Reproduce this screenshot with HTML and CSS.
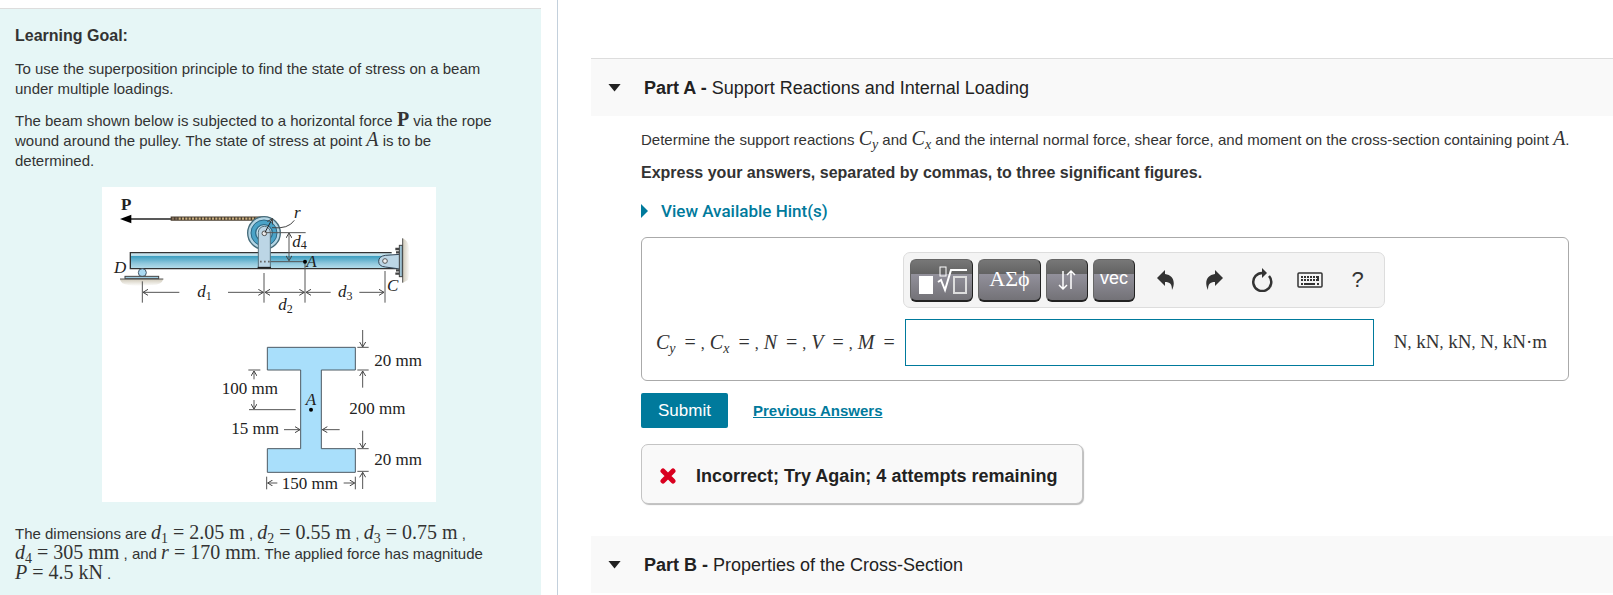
FILE: index.html
```html
<!DOCTYPE html>
<html lang="en">
<head>
  <meta charset="UTF-8">
  <meta name="viewport" content="width=device-width, initial-scale=1.0">
  <title>Superposition - Beam and Pulley</title>
  <link rel="stylesheet" href="styles.css">
</head>
<body>
  <div class="page">
    <!-- Problem statement -->
    <aside class="intro-pane">
      <div class="intro">
        <p class="goal"><b>Learning Goal:</b></p>
        <p>To use the superposition principle to find the state of stress on a beam under multiple loadings.</p>
        <p>The beam shown below is subjected to a horizontal force <b class="math">P</b> via the rope wound around the pulley. The state of stress at point <i class="math">A</i> is to be determined.</p>

        <svg class="figure" viewBox="0 0 1002 945" role="img" aria-label="Beam with pulley and its cross-section">
          <defs>
            <linearGradient id="beam" x1="0" y1="0" x2="0" y2="1">
              <stop offset="0" stop-color="#d5edf5"/>
              <stop offset="0.2" stop-color="#b5dbe8"/>
              <stop offset="0.24" stop-color="#3f9fc0"/>
              <stop offset="0.65" stop-color="#8cc6dc"/>
              <stop offset="1" stop-color="#b9dfec"/>
            </linearGradient>
            <linearGradient id="ground" x1="0" y1="0" x2="0" y2="1">
              <stop offset="0" stop-color="#cfc9b8"/>
              <stop offset="1" stop-color="#fff"/>
            </linearGradient>
            <linearGradient id="wall" x1="0" y1="0" x2="1" y2="0">
              <stop offset="0" stop-color="#cfc9b8"/>
              <stop offset="1" stop-color="#fff"/>
            </linearGradient>
            <marker id="tip" viewBox="0 0 18 20" refX="16" refY="10" markerWidth="18" markerHeight="20" markerUnits="userSpaceOnUse" orient="auto-start-reverse">
              <path d="M1 1 L16 10 L1 19" fill="none" stroke="#444" stroke-width="3"/>
            </marker>
          </defs>

          <!-- Beam, rope and pulley -->
          <g transform="translate(-6 -6)">
            <path d="M60 282 H190 Q185 302 150 300 Q110 306 85 300 Q62 298 60 282Z" fill="url(#ground)"/>
            <path d="M908 160 Q932 170 926 205 Q934 250 924 285 L908 293Z" fill="url(#wall)"/>
            <rect x="91" y="203" width="784" height="48" fill="url(#beam)"/>
            <path d="M875 203 H91 V251 H890" fill="none" stroke="#333" stroke-width="4"/>
            <circle cx="127" cy="263" r="12" fill="#a9d9f2" stroke="#456" stroke-width="3"/>
            <rect x="75" y="274" width="101" height="7" fill="#9cc9dd" stroke="#444" stroke-width="3"/>
            <path d="M60 282 H190 M908 160 V293" stroke="#555" stroke-width="3"/>
            <!-- Pin support at C -->
            <path d="M886 192 h14 M888 202 h12 M888 256 h12 M886 266 h14" fill="none" stroke="#444" stroke-width="7"/>
            <path d="M900 208 L856 211 Q836 214 836 229 Q836 244 856 246 L900 252Z" fill="#bcd6e6" stroke="#345" stroke-width="3"/>
            <rect x="898" y="181" width="9" height="94" fill="#9fc3d4" stroke="#444" stroke-width="3"/>
            <circle cx="855" cy="228" r="7" fill="#eee" stroke="#555" stroke-width="3"/>
            <!-- Rope and force -->
            <path d="M85 102 H215" stroke="#222" stroke-width="5"/>
            <path d="M60 102 L94 89 V115Z" fill="#000"/>
            <path d="M212 101 H490" stroke="#4b3f31" stroke-width="13"/>
            <path d="M236 101 H484" stroke="#c8ae7f" stroke-width="7" stroke-dasharray="6 4"/>
            <path d="M216 101 H234" stroke="#85705a" stroke-width="7" stroke-dasharray="6 4"/>
            <!-- Pulley -->
            <circle cx="492" cy="144" r="49" fill="#b4d5e4" stroke="#456b7a" stroke-width="4"/>
            <circle cx="492" cy="144" r="39" fill="#4ba3c7" stroke="#2b6885" stroke-width="3"/>
            <circle cx="492" cy="144" r="25" fill="#c5e1ed" stroke="#2b6885" stroke-width="4"/>
            <path d="M475 248 V142 A18 18 0 0 1 511 142 V248Z" fill="#bcd6e6" stroke="#56707c" stroke-width="3"/>
            <path d="M473 248 H513" stroke="#222" stroke-width="5"/>
            <circle cx="493" cy="145" r="7" fill="#eee" stroke="#555" stroke-width="3"/>
            <path d="M480 230 H510" stroke="#666" stroke-width="5" stroke-dasharray="5 7"/>
            <path d="M495 142 L517 101" stroke="#222" stroke-width="3" marker-end="url(#tip)"/>
            <path d="M516 128 Q565 133 583 106" fill="none" stroke="#444" stroke-width="3"/>
            <!-- Dimension lines -->
            <g stroke="#555" stroke-width="3">
              <path d="M496 143 H617 M512 230 H615"/>
              <path d="M567 144 V227" marker-start="url(#tip)" marker-end="url(#tip)"/>
              <path d="M127 289 V353 M492 264 V353 M615 232 V353 M855 258 V353"/>
              <path d="M238 322 H129" marker-end="url(#tip)"/>
              <path d="M384 322 H490" marker-end="url(#tip)"/>
              <path d="M495 322 H613" marker-start="url(#tip)" marker-end="url(#tip)"/>
              <path d="M692 322 H618" marker-end="url(#tip)"/>
              <path d="M778 322 H852" marker-end="url(#tip)"/>
            </g>
            <circle cx="615" cy="230" r="6"/>
            <text class="fig-text" x="63" y="76" font-weight="bold">P</text>
            <g class="fig-text fig-var">
              <text x="582" y="100">r</text>
              <text x="42" y="264">D</text>
              <text x="619" y="247">A</text>
              <text x="861" y="317">C</text>
              <text x="577" y="186">d<tspan class="fig-sub" dy="7">4</tspan></text>
              <text x="292" y="337">d<tspan class="fig-sub" dy="7">1</tspan></text>
              <text x="535" y="376">d<tspan class="fig-sub" dy="7">2</tspan></text>
              <text x="714" y="337">d<tspan class="fig-sub" dy="7">3</tspan></text>
            </g>
          </g>

          <!-- Cross-section -->
          <g transform="translate(294 399)">
            <path d="M202 82 H466 V150 H364 V386 H466 V457 H202 V386 H302 V150 H202Z" fill="#a9dffb" stroke="#4d5a63" stroke-width="3"/>
            <g stroke="#555" stroke-width="3">
              <path d="M472 82 H506 M472 150 H506 M472 386 H506 M472 454 H506 M145 150 H181 M147 269 H287 M200 470 V508 M466 470 V508"/>
              <path d="M488 30 V81" marker-end="url(#tip)"/>
              <path d="M488 203 V153" marker-end="url(#tip)"/>
              <path d="M488 332 V384" marker-end="url(#tip)"/>
              <path d="M488 507 V457" marker-end="url(#tip)"/>
              <path d="M162 178 V153" marker-end="url(#tip)"/>
              <path d="M162 240 V267" marker-end="url(#tip)"/>
              <path d="M252 329 H300" marker-end="url(#tip)"/>
              <path d="M419 329 H367" marker-end="url(#tip)"/>
              <path d="M232 489 H203" marker-end="url(#tip)"/>
              <path d="M431 489 H464" marker-end="url(#tip)"/>
            </g>
            <circle cx="333" cy="269" r="6"/>
            <g class="fig-text">
              <text x="317" y="255" font-style="italic">A</text>
              <text x="523" y="137">20 mm</text>
              <text x="65" y="222">100 mm</text>
              <text x="448" y="283">200 mm</text>
              <text x="94" y="343">15 mm</text>
              <text x="523" y="436">20 mm</text>
              <text x="245" y="506">150 mm</text>
            </g>
          </g>
        </svg>

        <p>The dimensions are <span class="math"><i>d</i><sub>1</sub> = 2.05 m</span> , <span class="math"><i>d</i><sub>2</sub> = 0.55 m</span> , <span class="math"><i>d</i><sub>3</sub> = 0.75 m</span> , <span class="math"><i>d</i><sub>4</sub> = 305 mm</span> , and <span class="math"><i>r</i> = 170 mm</span>. The applied force has magnitude <span class="math"><i>P</i> = 4.5 kN</span> .</p>
      </div>
    </aside>

    <!-- Question parts -->
    <main class="parts">
      <section>
        <h2 class="part-header part-first">
          <button class="toggle" type="button" aria-label="Collapse Part A"></button>
          <span><b>Part A -</b> Support Reactions and Internal Loading</span>
        </h2>
        <div class="part-body">
          <p>Determine the support reactions <span class="math"><i>C<sub>y</sub></i></span> and <span class="math"><i>C<sub>x</sub></i></span> and the internal normal force, shear force, and moment on the cross-section containing point <i class="math">A</i>.</p>
          <p><b>Express your answers, separated by commas, to three significant figures.</b></p>
          <a class="hints" href="#">View Available Hint(s)</a>

          <form class="answer-box">
            <div class="toolbar">
              <button class="key key-wide" type="button" aria-label="Templates">
                <svg width="50" height="30" viewBox="0 0 50 30" fill="none" stroke="#fff">
                  <rect x="2" y="11" width="14" height="18" fill="#fff" stroke="none"/>
                  <rect x="23" y="2" width="6" height="9"/>
                  <path d="M21 17 L24 15 L28 25 L34 5 H50" stroke-width="2"/>
                  <rect x="37" y="12" width="12" height="16" stroke-width="2" stroke="#ddd"/>
                </svg>
              </button>
              <button class="key key-wide key-greek" type="button">ΑΣϕ</button>
              <button class="key" type="button" aria-label="Arrows">
                <svg width="18" height="22" viewBox="0 0 18 22" fill="none" stroke="#fff" stroke-width="1.5">
                  <path d="M5 2 V20 M1 16 L5 20 L9 16 M13 20 V2 M9 6 L13 2 L17 6"/>
                </svg>
              </button>
              <button class="key key-vec" type="button">vec</button>
              <button class="tool" type="button" aria-label="Undo">
                <svg width="18" height="20" viewBox="0 0 18 20"><path d="M0 8 L8 0 V4 C16 5 19 12 15 20 C15 14 13 12 8 12 V16Z"/></svg>
              </button>
              <button class="tool" type="button" aria-label="Redo">
                <svg width="18" height="20" viewBox="0 0 18 20"><path d="M18 8 L10 0 V4 C2 5 -1 12 3 20 C3 14 5 12 10 12 V16Z"/></svg>
              </button>
              <button class="tool" type="button" aria-label="Reset">
                <svg width="22" height="24" viewBox="0 0 22 24"><path d="M18 8 A9 9 0 1 1 12 5" fill="none" stroke="#333" stroke-width="2.5"/><path d="M11 0 L16 5 L11 10Z"/></svg>
              </button>
              <button class="tool" type="button" aria-label="Keyboard shortcuts">
                <svg width="26" height="16" viewBox="0 0 26 16" fill="none" stroke="#333">
                  <rect x="1" y="1" width="24" height="14" rx="1" stroke-width="1.5"/>
                  <path d="M4 5 H22 M4 8 H20" stroke-width="2" stroke-dasharray="2 1"/>
                  <path d="M4 12 H6 M7 12 H18 M20 12 H22 M21 4 V9" stroke-width="2"/>
                </svg>
              </button>
              <button class="tool tool-help" type="button">?</button>
            </div>
            <label class="math answer-label" for="answer"><i>C<sub>y</sub></i> <span class="eq">=</span><span class="sep">,</span> <i>C<sub>x</sub></i> <span class="eq">=</span><span class="sep">,</span> <i>N</i> <span class="eq">=</span><span class="sep">,</span> <i>V</i> <span class="eq">=</span><span class="sep">,</span> <i>M</i> <span class="eq">=</span></label>
            <input class="answer-input" id="answer" type="text">
            <span class="math units">N<span class="sep">,</span> kN<span class="sep">,</span> kN<span class="sep">,</span> N<span class="sep">,</span> kN·m</span>
          </form>

          <div class="actions">
            <button class="submit" type="button">Submit</button>
            <a class="previous" href="#">Previous Answers</a>
          </div>

          <div class="feedback">
            <svg width="16" height="16" viewBox="0 0 16 16"><path d="M3 3 L13 13 M13 3 L3 13" stroke="#d9001f" stroke-width="5" stroke-linecap="round"/></svg>
            <b>Incorrect; Try Again; 4 attempts remaining</b>
          </div>
        </div>
      </section>

      <section>
        <h2 class="part-header">
          <button class="toggle" type="button" aria-label="Collapse Part B"></button>
          <span><b>Part B -</b> Properties of the Cross-Section</span>
        </h2>
      </section>
    </main>
  </div>
</body>
</html>
```
FILE: styles.css
```css
* {
  box-sizing: border-box;
}
body {
  margin: 0;
  font-family: "Liberation Sans", Arial, sans-serif;
  font-size: 15px;
  line-height: 20px;
  color: #333;
  background: #fff;
}
button {
  font-family: inherit;
  cursor: pointer;
}
p b {
  font-size: 16px;
}
.page {
  display: flex;
  min-height: 100vh;
}

/* Left pane */
.intro-pane {
  flex: 0 0 558px;
  display: flex;
  padding: 8px 16px 0 0;
  border-right: 1px solid #c3d0dc;
}
.intro {
  flex: 1;
  padding: 17px 38px 0 15px;
  border-top: 1px solid #ddd;
  background: #e6f6f6;
}
.intro p {
  margin: 0 0 12px;
}
.intro .goal {
  margin-bottom: 13px;
}
.figure {
  display: block;
  width: 334px;
  margin: 16px auto 22px 87px;
  background: #fff;
}
.fig-text {
  font-family: "Liberation Serif", "Times New Roman", serif;
  font-size: 51px;
  fill: #222;
}
.fig-var {
  font-style: italic;
}
.fig-sub {
  font-size: 36px;
  font-style: normal;
}

/* Formulas */
p .math,
.math {
  font-family: "Liberation Serif", "Times New Roman", serif;
  font-size: 20px;
  line-height: 0;
  white-space: nowrap;
}
.math sub {
  font-size: 14px;
  line-height: 0;
  vertical-align: -4px;
}

/* Right pane */
.parts {
  flex: 1;
  min-width: 0;
  padding: 58px 0 0 33px;
}
.part-header {
  display: flex;
  align-items: center;
  gap: 23px;
  height: 57px;
  margin: 0;
  padding-left: 17px;
  font-size: 18px;
  font-weight: normal;
  color: #222;
  background: #f9f9f9;
}
.part-first {
  height: 58px;
  border-top: 1px solid #ddd;
}
.toggle {
  width: 13px;
  height: 8px;
  padding: 0;
  border: none;
  background: #222;
  clip-path: polygon(0 0, 100% 0, 50% 100%);
}
.part-body {
  padding: 14px 0 32px 50px;
}
.part-body p {
  margin: 0 0 13px;
}
.hints {
  display: flex;
  align-items: center;
  gap: 13px;
  margin-top: 18px;
  font-family: Roboto, Arial, sans-serif;
  font-size: 17px;
  font-weight: 500;
  color: #007a9c;
  text-decoration: none;
}
.hints::before {
  content: "";
  border-left: 7px solid #007a9c;
  border-top: 7px solid transparent;
  border-bottom: 7px solid transparent;
}

/* Answer entry */
.answer-box {
  display: grid;
  grid-template-columns: 249px 1fr auto;
  align-items: center;
  row-gap: 11px;
  margin: 16px 44px 12px 0;
  padding: 14px 21px 14px 14px;
  border: 1px solid #aaa;
  border-radius: 6px;
}
.toolbar {
  grid-column: 2 / 4;
  justify-self: start;
  display: flex;
  align-items: center;
  gap: 5px;
  width: 482px;
  height: 56px;
  margin-left: -2px;
  padding-left: 6px;
  border: 1px solid #ddd;
  border-radius: 7px;
  background: #f4f4f4;
}
.key {
  display: flex;
  align-items: center;
  justify-content: center;
  width: 42px;
  height: 43px;
  padding: 0;
  border: 1px solid #666;
  border-right-color: #222;
  border-bottom: 2px solid #222;
  border-radius: 6px;
  color: #fff;
  background: linear-gradient(#777, #636363 34%, #93919c 34%, #737277);
}
.key-wide {
  width: 63px;
}
.key-greek {
  padding-bottom: 2px;
  font-family: "Liberation Serif", "Times New Roman", serif;
  font-size: 22px;
}
.key-vec {
  margin-right: 4px;
  padding-bottom: 2px;
  font-size: 18px;
}
.tool {
  display: flex;
  align-items: center;
  justify-content: center;
  width: 43px;
  height: 43px;
  padding: 0;
  border: none;
  background: none;
  color: #333;
  fill: #333;
}
.tool-help {
  font-size: 22px;
}
.answer-label {
  line-height: 24px;
}
.eq {
  margin: 0 5px 0 4px;
}
.sep {
  font-size: 16px;
}
.answer-input {
  width: 100%;
  height: 47px;
  padding: 0 10px;
  border: 1px solid #007a9c;
  font-size: 18px;
}
.units {
  padding-left: 20px;
  font-size: 19px;
  line-height: 24px;
}

/* Submit row and feedback */
.actions {
  display: flex;
  align-items: center;
  gap: 25px;
}
.submit {
  width: 87px;
  height: 35px;
  border: none;
  border-radius: 2px;
  font-size: 17px;
  color: #fff;
  background: #007a9c;
}
.previous {
  font-size: 15px;
  font-weight: bold;
  color: #007a9c;
}
.feedback {
  display: flex;
  align-items: center;
  gap: 20px;
  width: fit-content;
  min-width: 442px;
  height: 60px;
  margin-top: 16px;
  padding: 4px 17px 0 18px;
  border: 1px solid #c4c4c4;
  border-radius: 7px;
  box-shadow: 1px 1px 1px #bbb;
  font-size: 18px;
  color: #222;
  background: #f9f9f9;
}
```
